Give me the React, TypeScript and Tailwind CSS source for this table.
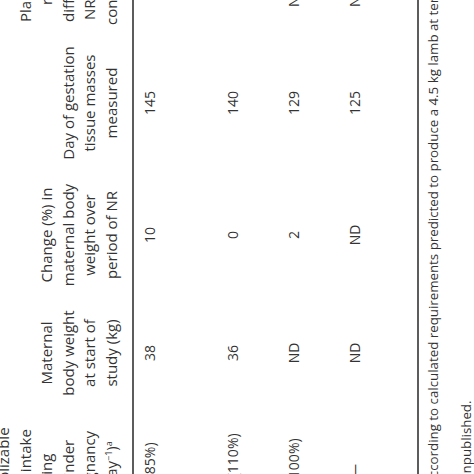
import React from "react";

// the page is a photographed table page turned on its side: build it upright, then turn it -90deg

const widths = ["w-[126px]", "w-[110px]", "w-[126px]", "w-[138px]", "w-[120px]"];

const headers: React.ReactNode[][] = [
  [
    "Metabolizable",
    "energy intake",
    "during",
    "remainder",
    "of pregnancy",
    <>
      (MJ day<sup className="text-[9px]">−1</sup>)<sup className="text-[9px]">a</sup>
    </>,
  ],
  ["Maternal", "body weight", "at start of", "study (kg)"],
  ["Change (%) in", "maternal body", "weight over", "period of NR"],
  ["Day of gestation", "tissue masses", "measured"],
];

const rows = [
  { h: "h-[69px] pt-[5px]", first: "pr-[10px]", cells: ["10.3 (85%)", "38", "10", "145"], last: "" },
  { h: "h-[61px] pt-[19px]", first: "", cells: ["13.9 (110%)", "36", "0", "140"], last: "" },
  { h: "h-[61px] pt-[19px]", first: "pr-[10px]", cells: ["12.1 (100%)", "ND", "2", "129"], last: "ND" },
  { h: "h-[61px] pt-[19px]", first: "", cells: ["—", "ND", "ND", "125"], last: "ND" },
];

function App() {
  return (
    <div className="w-[474px] h-[474px] overflow-hidden bg-white">
      <div
        className="w-[474px] h-[474px] -rotate-90 overflow-hidden text-[#333]"
        style={{ fontFamily: '"Open Sans", "Noto Sans", sans-serif' }}
      >
        <div className="w-[620px] -ml-[60px]">
          {/* column heads */}
          <div className="flex h-[132px] pb-[10px] items-end text-[15px] leading-[21.5px]">
            {headers.map((col, i) => (
              <div
                key={i}
                className={`${widths[i]} shrink-0 flex flex-col items-center ${i === 0 ? "pr-[11px]" : ""}`}
              >
                {col.map((l, j) => (
                  <div key={j} className="whitespace-nowrap">
                    {l}
                  </div>
                ))}
              </div>
            ))}
            <div className="w-[120px] shrink-0 flex flex-col">
              <div className="pl-[12px] whitespace-nowrap">Placental</div>
              <div className="pl-[29px] whitespace-nowrap">ratio</div>
              <div className="pl-[12px] whitespace-nowrap">difference</div>
              <div className="pl-[14px] whitespace-nowrap">NR vs</div>
              <div className="pl-[9px] whitespace-nowrap">control</div>
            </div>
          </div>
          <div className="h-[2px] bg-[#5c5c5c]" />

          {/* body */}
          {rows.map((r, i) => (
            <div key={i} className={`flex items-start text-[14px] leading-[22px] ${r.h}`}>
              {r.cells.map((c, j) => (
                <div
                  key={j}
                  className={`${widths[j]} shrink-0 text-center whitespace-nowrap ${j === 0 ? r.first : ""}`}
                >
                  {c}
                </div>
              ))}
              <div className="w-[120px] shrink-0 whitespace-nowrap pl-[27px]">{r.last}</div>
            </div>
          ))}
          <div className="h-[31px]" />
          <div className="h-[2px] bg-[#5c5c5c]" />

          {/* notes */}
          <div className="pl-[44px] text-[13.3px] leading-[20px]">
            <div className="mt-[4px] whitespace-nowrap">
              <sup className="text-[8px]">a</sup>According to calculated requirements predicted to produce a 4.5 kg lamb at term.
            </div>
            <div className="mt-[13px] pl-[2px] whitespace-nowrap">
              <sup className="text-[8px]">b</sup>Unpublished.
            </div>
          </div>
        </div>
      </div>
    </div>
  );
}

export default App;
